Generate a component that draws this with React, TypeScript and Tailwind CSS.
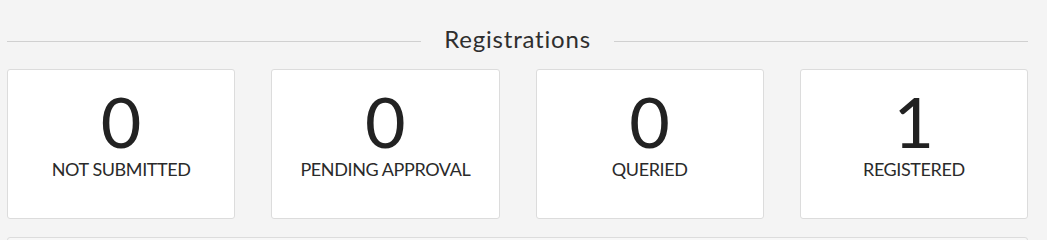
import React from "react";

const stats = [
  { value: "0", label: "NOT SUBMITTED" },
  { value: "0", label: "PENDING APPROVAL" },
  { value: "0", label: "QUERIED" },
  { value: "1", label: "REGISTERED" },
];

export default function App() {
  return (
    <div
      className="w-[1047px] h-[240px] overflow-hidden bg-[#f4f4f4]"
      style={{ fontFamily: "Lato, 'Open Sans', sans-serif" }}
    >
      <div className="ml-[7px] w-[1021px] pt-[25px]">
        <div className="flex items-center h-[29px]">
          <div className="flex-1 h-px bg-[#d0d0d0] mt-[3px]" />
          <h2 className="px-[23px] text-[24px] leading-[1.2] text-[#2e2e2e] tracking-[0.8px]">
            Registrations
          </h2>
          <div className="flex-1 h-px bg-[#d0d0d0] mt-[3px]" />
        </div>
        <div className="grid grid-cols-4 gap-x-[36px] mt-[15px]">
          {stats.map((s) => (
            <div
              key={s.label}
              className="h-[150px] bg-white border border-[#dcdcdc] rounded-[3px] flex flex-col items-center pt-[16px]"
            >
              <div className="text-[70px] leading-none text-[#222]">{s.value}</div>
              <div className="mt-[3px] text-[18px] leading-[1.2] text-[#2a2a2a] tracking-[-0.4px]">
                {s.label}
              </div>
            </div>
          ))}
        </div>
        <div className="mt-[18px] h-[40px] bg-[#f7f7f7] border border-[#dcdcdc] rounded-[3px]" />
      </div>
    </div>
  );
}
